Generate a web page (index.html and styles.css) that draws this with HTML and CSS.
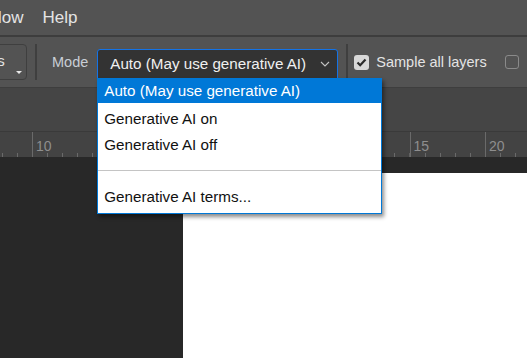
FILE: index.html
```html
<!DOCTYPE html>
<html lang="en">
<head>
  <meta charset="UTF-8" />
  <title>Mode menu</title>
  <link rel="stylesheet" href="styles.css">
</head>
<body>

  <div class="menubar">
    <span class="menu-item menu-cut">Window</span>
    <span class="menu-item">Help</span>
  </div>

  <div class="options">
    <div class="preset">
      <span class="preset-label">Canvas</span>
      <span class="preset-arrow"></span>
    </div>
    <div class="divider"></div>
    <span class="opt-label">Mode</span>

    <div class="select-wrap">
      <div class="select">
        <span class="select-value">Auto (May use generative AI)</span>
        <svg class="chevron" width="10" height="6" viewBox="0 0 10 6">
          <polyline points="1,1 5,5 9,1" fill="none" stroke="#c4c4c4" stroke-width="1.1"/>
        </svg>
      </div>

      <!-- open dropdown list -->
      <ul class="dropdown">
        <li class="item active">Auto (May use generative AI)</li>
        <li class="item">Generative AI on</li>
        <li class="item">Generative AI off</li>
        <li class="sep"></li>
        <li class="item">Generative AI terms...</li>
      </ul>
    </div>

    <div class="divider"></div>
    <label class="check">
      <span class="box checked">
        <svg width="11" height="9" viewBox="0 0 11 9">
          <polyline points="1.5,4.5 4.2,7.2 9.5,1.5" fill="none" stroke="#2a2a2a" stroke-width="2.2"/>
        </svg>
      </span>
      Sample all layers
    </label>
    <span class="box empty"></span>
  </div>

  <div class="tabs"></div>

  <!-- labels under the open menu are left empty -->
  <div class="ruler">
    <div class="ruler-track">
      <div class="seg"></div>
      <div class="seg"><span>10</span></div>
      <div class="seg"></div>
      <div class="seg"></div>
      <div class="seg"></div>
      <div class="seg"></div>
      <div class="seg"><span>15</span></div>
      <div class="seg"><span>20</span></div>
    </div>
  </div>

  <div class="workspace">
    <div class="canvas"></div>
  </div>

</body>
</html>
```

FILE: styles.css
```css
html, body {
  height: 100%;
}

body {
  margin: 0;
  overflow: hidden;
  background-color: #282828;
  font-family: "Liberation Sans", Arial, sans-serif;
  display: flex;
  flex-direction: column;
}

/* top menu */
.menubar {
  height: 35px;
  flex: 0 0 35px;
  background-color: #535353;
  border-bottom: 2px solid #3d3d3d;
  display: flex;
  align-items: center;
  gap: 19px;
  overflow: hidden;
}

.menu-item {
  color: #e4e4e4;
  font-size: 17px;
  white-space: nowrap;
}

.menu-cut {
  margin-left: -37px;
}

/* options bar */
.options {
  height: 50px;
  flex: 0 0 50px;
  background-color: #535353;
  border-bottom: 1px solid #3e3e3e;
  display: flex;
  align-items: center;
  overflow: visible;
  position: relative;
  z-index: 2;
}

.preset {
  box-sizing: border-box;
  width: 38px;
  height: 36px;
  margin-left: -11px;
  border: 1px solid #3f3f3f;
  border-radius: 4px;
  overflow: hidden;
  position: relative;
  display: flex;
  align-items: center;
}

.preset-label {
  color: #e4e4e4;
  font-size: 15px;
  margin-left: -36px;
  margin-top: -4px;
}

.preset-arrow {
  position: absolute;
  right: 4px;
  bottom: 5px;
  width: 0;
  height: 0;
  border-left: 3px solid transparent;
  border-right: 3px solid transparent;
  border-top: 3px solid #e8e8e8;
}

.divider {
  width: 2px;
  height: 36px;
  background-color: #3f3f3f;
  margin-left: 8px;
}

.opt-label {
  color: #c9ced6;
  font-size: 14.5px;
  margin-left: 15px;
  margin-right: 9px;
}

.select-wrap {
  position: relative;
  margin-top: 3px;
}

.select {
  box-sizing: border-box;
  width: 241px;
  height: 30px;
  background-color: #333333;
  border: 1px solid #1473e6;
  border-radius: 3px 3px 0 0;
  display: flex;
  align-items: center;
  justify-content: space-between;
  padding: 0 7px 0 12px;
}

.select-value {
  color: #f0f0f0;
  font-size: 15.2px;
  white-space: nowrap;
}

.chevron {
  margin-top: 1px;
}

.dropdown {
  position: absolute;
  left: 0;
  top: 29px;
  box-sizing: border-box;
  width: 285px;
  margin: 0;
  padding: 0 0 3px;
  list-style: none;
  background-color: #fff;
  border: 1px solid #0078d7;
  box-shadow: 2px 3px 4px rgba(0, 0, 0, 0.45);
}

.item {
  height: 26px;
  line-height: 26px;
  padding-left: 6px;
  font-size: 15.2px;
  color: #111;
  white-space: nowrap;
}

.item.active {
  height: 24px;
  line-height: 24px;
  margin-bottom: 3px;
  background-color: #0078d7;
  color: #fff;
}

.sep {
  height: 1px;
  background-color: #c4c4c4;
  margin: 12px 0 13px;
}

.check {
  display: flex;
  align-items: center;
  gap: 7px;
  margin-left: 6px;
  color: #e4e4e4;
  font-size: 14.5px;
  white-space: nowrap;
}

.box {
  box-sizing: border-box;
  width: 15px;
  height: 15px;
  border-radius: 3px;
  display: flex;
  align-items: center;
  justify-content: center;
}

.box.checked {
  background-color: #d8d8d8;
}

.box.empty {
  width: 14px;
  height: 14px;
  border: 1.5px solid #8a8a8a;
  margin-left: 18px;
}

/* document tab strip and ruler */
.tabs {
  height: 43px;
  flex: 0 0 43px;
  background-color: #454545;
}

.ruler {
  height: 25px;
  flex: 0 0 25px;
  background-color: #434343;
  border-top: 1px solid #3a3a3a;
  overflow: hidden;
}

.ruler-track {
  display: flex;
  margin-left: -43.5px;
  height: 100%;
}

.seg {
  flex: 0 0 75.5px;
  box-sizing: border-box;
  height: 100%;
  border-left: 1px solid #6a6a6a;
  background: repeating-linear-gradient(to right, transparent 0 14.1px, #6a6a6a 14.1px 15.1px) bottom / 100% 4px no-repeat;
}

.seg span {
  display: block;
  padding: 6px 0 0 3px;
  color: #8e8e8e;
  font-size: 14px;
}

/* workspace */
.workspace {
  flex: 1;
  padding-top: 16px;
  display: flex;
}

.canvas {
  flex: 1;
  margin-left: 183px;
  background-color: #fff;
}
```
